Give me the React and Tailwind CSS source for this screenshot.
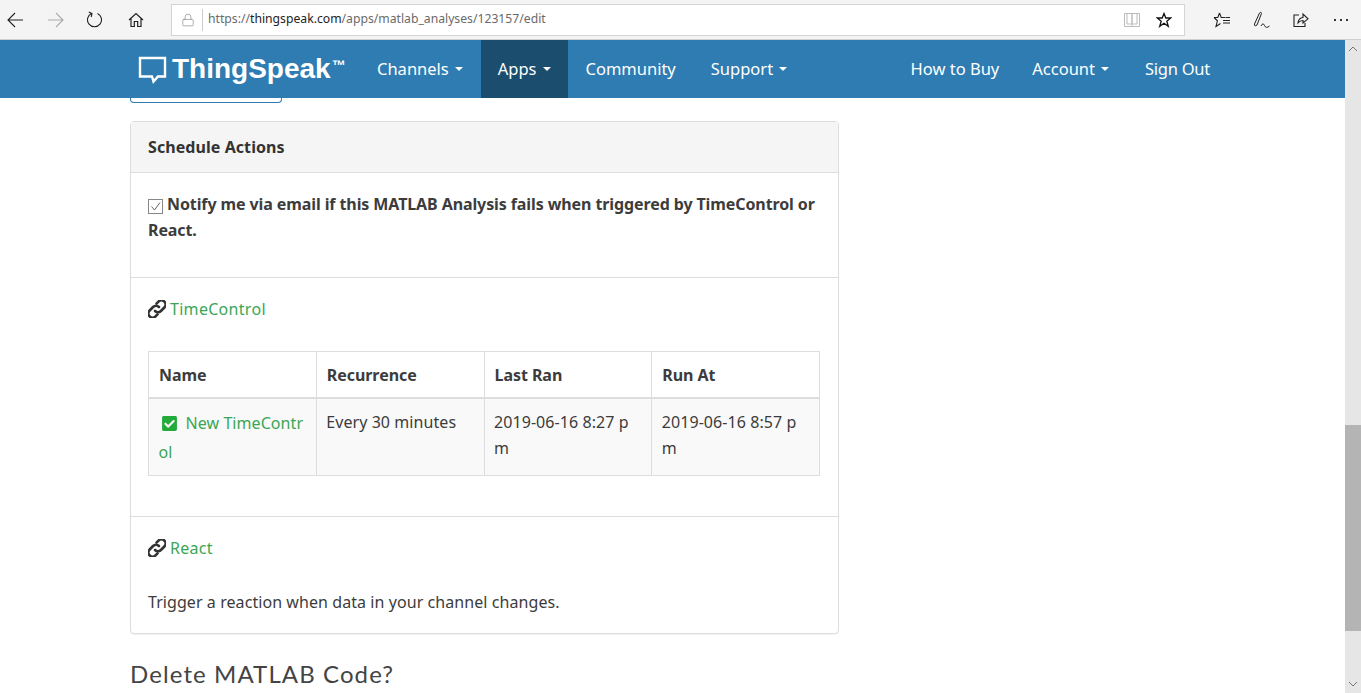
import React from 'react';
import { Lock } from 'lucide-react';
import { FaCheckSquare } from 'react-icons/fa';

const Caret = () => (
  <span className="inline-block ml-[6px] w-0 h-0 border-x-[4px] border-x-transparent border-t-[4px] border-t-white" />
);

const NavItem = ({ label, caret, active, className = 'px-[17px]' }) => (
  <div className={`h-full flex items-center ${className} ${active ? 'bg-[#1b4d6e]' : ''}`}>
    <span>{label}</span>
    {caret && <Caret />}
  </div>
);

const Arrow = ({ flip, className = '' }) => (
  <svg width="17" height="16" viewBox="0 0 17 16" fill="none" stroke="currentColor" strokeWidth="1.1" className={`${flip ? '-scale-x-100' : ''} ${className}`}>
    <path d="M16 8 H1 M8 1 L1 8 L8 15" />
  </svg>
);

const StarIcon = ({ size = 16 }) => (
  <svg width={size} height={size} viewBox="0 0 16 16" fill="none" stroke="currentColor" strokeWidth="1.3">
    <path d="M8 1.5 L9.8 6 H14.8 L10.8 9.2 L12.3 14.3 L8 11.3 L3.7 14.3 L5.2 9.2 L1.2 6 H6.2 Z" />
  </svg>
);

const Toolbar = () => (
  <div className="h-10 flex items-center bg-[#f4f4f4] border-b border-[#d0d0d0] text-[#222] shrink-0">
    <div className="w-[171px] flex items-center shrink-0">
      <Arrow className="ml-[7px]" />
      <Arrow flip className="ml-[23px] text-[#aaa]" />
      <svg width="16" height="17" viewBox="0 0 16 17" fill="none" stroke="currentColor" strokeWidth="1.1" className="ml-[23px]">
        <path d="M10.5 2.5 A7 7 0 1 1 4.5 2.5 M1.8 1 L5 2.6 L4.2 6" />
      </svg>
      <svg width="16" height="16" viewBox="0 0 16 16" fill="none" stroke="currentColor" strokeWidth="1.2" className="ml-[25px]">
        <path d="M1 8 L8 1.5 L15 8 M3 6.5 V14.5 H6.3 V9.5 H9.7 V14.5 H13 V6.5" />
      </svg>
    </div>
    <div className="w-[1014px] h-8 bg-white border border-[#d4d4d4] flex items-center shrink-0">
      <Lock size={14} strokeWidth={1} className="ml-[9px] text-[#777]" />
      <div className="ml-[7px] w-px h-[22px] bg-[#ccc]" />
      <span className="ml-[5px] text-[12.2px] text-[#6a6a6a] font-['Noto_Sans',sans-serif]">
        https://<span className="text-[#222]">thingspeak.com</span>/apps/matlab_analyses/123157/edit
      </span>
      <svg width="16" height="15" viewBox="0 0 16 15" fill="none" stroke="#bbb" className="ml-auto">
        <path d="M0.5 1.5 H15.5 V14.5 H0.5 Z M3 1.5 V12 H8 V1.5 M8 1.5 V14.5 M8 12 H13 V1.5" />
      </svg>
      <div className="ml-[16px] mr-[12px] text-[#111]"><StarIcon /></div>
    </div>
    <div className="flex-1 flex items-center text-[#222]">
      <svg width="18" height="16" viewBox="0 0 18 16" fill="none" stroke="currentColor" strokeWidth="1.1" className="ml-[28px]">
        <path d="M6.5 1 L8.2 5.5 H12 M4.8 5.5 L6.5 1 M1 5.5 H4.8 M1 5.5 L4.4 8.8 L3 14.5 L7.5 11.5 M10 8.5 H17 M10 11 H17 M12.5 5.5 H17" />
      </svg>
      <svg width="17" height="18" viewBox="0 0 17 18" fill="none" stroke="currentColor" strokeWidth="1" className="ml-[22px]">
        <path d="M1.5 13 L6.5 2 Q8 0 8.5 2.5 L4 14 Q1 16 1.5 13 Z M8 15 Q10 11 11.5 14.5 T16.5 15" />
      </svg>
      <svg width="16" height="16" viewBox="0 0 16 16" fill="none" stroke="currentColor" strokeWidth="1.1" className="ml-[23px]">
        <path d="M6 3 H1 V14.5 H12 V11 M5 11 Q5.5 6 10 5.5 V2 L15 6.8 L10 11 V8.5 Q7 8.5 5 11 Z" />
      </svg>
      <span className="ml-[25px] flex gap-[4px]">
        <i className="w-[2px] h-[2px] bg-[#333]" />
        <i className="w-[2px] h-[2px] bg-[#333]" />
        <i className="w-[2px] h-[2px] bg-[#333]" />
      </span>
    </div>
  </div>
);

const Navbar = () => (
  <div className="h-[58px] bg-[#2e7cb2] text-white text-[16.5px] flex items-center shrink-0 font-['Noto_Sans',sans-serif] relative z-10">
    <div className="pl-[138px] flex items-center w-[360px] shrink-0">
      <svg width="29" height="29" viewBox="0 0 29 29" fill="none" stroke="white" strokeWidth="2.4">
        <path d="M2 3 H27 V21.5 H20 L15.5 26.5 L14 21.5 H2 Z" />
      </svg>
      <span className="ml-[5px] text-[28px] font-bold font-['Liberation_Sans',sans-serif] leading-none">ThingSpeak</span>
      <span className="ml-[1px] text-[14px] font-bold self-start mt-[1px] leading-[18px] font-['Liberation_Sans',sans-serif]">™</span>
    </div>
    <NavItem label="Channels" caret className="pl-[17px] pr-[18px]" />
    <NavItem label="Apps" caret active />
    <NavItem label="Community" className="pl-[18px] pr-[17px]" />
    <NavItem label="Support" caret className="pl-[18px] pr-[17px]" />
    <div className="ml-auto flex h-full mr-[118px]">
      <NavItem label="How to Buy" className="pl-[17px] pr-[16px]" />
      <NavItem label="Account" caret className="pl-[17px] pr-[18px]" />
      <NavItem label="Sign Out" className="pl-[18px] pr-[17px] tracking-[-0.25px]" />
    </div>
  </div>
);

const Scrollbar = () => (
  <div className="w-4 bg-[#e6e6e6] flex flex-col items-center justify-between py-[6px] shrink-0 relative text-[#777]">
    <svg width="10" height="6" viewBox="0 0 10 6" fill="none" stroke="currentColor"><path d="M1 5 L5 1 L9 5" /></svg>
    <div className="absolute top-[385px] h-[206px] w-full bg-[#b4b4b4]" />
    <svg width="10" height="6" viewBox="0 0 10 6" fill="none" stroke="currentColor"><path d="M1 1 L5 5 L9 1" /></svg>
  </div>
);

const th = 'border border-[#ddd] border-b-2 px-[10px] pt-[10px] pb-[9px] text-left font-bold tracking-[-0.05px]';
const td = 'border border-[#ddd] px-[9.5px] pt-[10px] pb-[8px] align-top break-all';

const SectionLink = ({ label }) => (
  <div className="flex items-center gap-[4px] h-[26px]">
    <svg width="18" height="18" viewBox="2.5 2.5 13 13" fill="none" stroke="#333" strokeWidth="1.9" strokeLinecap="round">
      <g transform="rotate(-45 9 9)">
        <path d="M11 9 a3 3 0 0 0 -3 -3 H4.5 a3 3 0 0 0 0 6 H6.5" />
        <path d="M7 9 a3 3 0 0 0 3 3 h3.5 a3 3 0 0 0 0 -6 H11.5" />
      </g>
    </svg>
    <span className="text-[#3aa655] tracking-[0.3px]">{label}</span>
  </div>
);

const Panel = () => (
  <div className="w-[709px] mt-[18px] border border-[#ddd] rounded bg-white shadow-[0_1px_1px_rgba(0,0,0,0.05)]">
    <div className="h-[51px] bg-[#f5f5f5] border-b border-[#ddd] flex items-center px-[17px] pb-[1px] font-bold text-[#333]">
      Schedule Actions
    </div>
    <div className="h-[105px] border-b border-[#ddd] px-[17px] pt-[18px] font-bold leading-[26px] tracking-[-0.1px]">
      <span className="inline-block w-[15px] h-[15px] border border-[#888] align-[-4px] mr-1">
        <svg width="13" height="13" viewBox="0 0 13 13" fill="none" stroke="#666"><path d="M2.5 6.5 L5.5 10 L11 2.5" /></svg>
      </span>
      Notify me via email if this MATLAB Analysis fails when triggered by TimeControl or React.
    </div>
    <div className="h-[239px] border-b border-[#ddd] px-[17px] pt-[18px]">
      <SectionLink label="TimeControl" />
      <table className="w-[672px] mt-[29px] table-fixed border-collapse leading-[26px]">
        <thead>
          <tr>
            <th className={th}>Name</th>
            <th className={th}>Recurrence</th>
            <th className={th}>Last Ran</th>
            <th className={th}>Run At</th>
          </tr>
        </thead>
        <tbody>
          <tr className="bg-[#f9f9f9]">
            <td className={`${td} text-[#3aa655] leading-[29px]`}>
              <FaCheckSquare size={17} className="inline text-[#22aa3a] ml-[2px] mr-2 align-[-3px]" />
              New TimeControl
            </td>
            <td className={td}>Every 30 minutes</td>
            <td className={td}>2019-06-16 8:27 pm</td>
            <td className={td}>2019-06-16 8:57 pm</td>
          </tr>
        </tbody>
      </table>
    </div>
    <div className="h-[116px] px-[17px] pt-[18px]">
      <SectionLink label="React" />
      <p className="mt-[28px] leading-[26px]">Trigger a reaction when data in your channel changes.</p>
    </div>
  </div>
);

export default function App() {
  return (
    <div className="h-[693px] w-[1361px] overflow-hidden flex flex-col bg-white">
      <Toolbar />
      <div className="flex-1 flex min-h-0">
        <div className="flex-1 flex flex-col min-w-0">
          <Navbar />
          <div className="pl-[130px] text-[16px] tracking-[0.07px] text-[#3c3c3c] font-['Noto_Sans',sans-serif] overflow-hidden">
            <div className="w-[152px] h-[5px] border border-t-0 border-[#2e7cb2] rounded-b" />
            <Panel />
            <h3 className="mt-[24px] text-[24px] tracking-[1.1px] font-['Lato',sans-serif] text-[#444] leading-[32px]">Delete MATLAB Code?</h3>
          </div>
        </div>
        <Scrollbar />
      </div>
    </div>
  );
}
